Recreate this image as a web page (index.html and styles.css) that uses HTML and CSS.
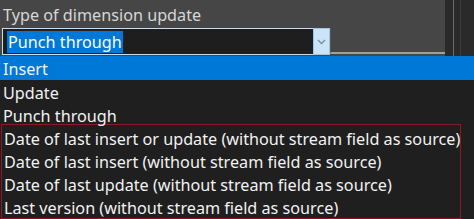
FILE: index.html
```html
<!DOCTYPE html>
<html>
<head>
<meta charset="utf-8">
<link rel="stylesheet" href="styles.css">
</head>
<body>
<div class="top">
  <div class="main">
    <div class="label">Type of dimension update</div>
    <div class="combo-row">
      <div class="combo">
        <div class="field"><span class="sel">Punch through</span></div>
        <div class="btn">
          <svg width="9" height="6" viewBox="0 0 9 6"><polyline points="1,1 4.5,4.5 8,1" fill="none" stroke="#7d8c9c" stroke-width="1.3"/></svg>
        </div>
      </div>
      <div class="filler"></div>
    </div>
  </div>
  <div class="side">
    <div class="line a"></div>
    <div class="line b"></div>
  </div>
</div>
<div class="list">
  <div class="item active">Insert</div>
  <div class="item">Update</div>
  <div class="item">Punch through</div>
  <div class="boxed">
    <div class="item">Date of last insert or update (without stream field as source)</div>
    <div class="item">Date of last insert (without stream field as source)</div>
    <div class="item">Date of last update (without stream field as source)</div>
    <div class="item">Last version (without stream field as source)</div>
  </div>
</div>
</body>
</html>
```
FILE: styles.css
```css
html, body {
  margin: 0;
  padding: 0;
}
body {
  width: 474px;
  height: 219px;
  overflow: hidden;
  background: #1f1f1f;
  font-family: "Noto Sans", "Open Sans", sans-serif;
  font-size: 16.2px;
}
.top {
  display: flex;
  height: 56px;
}
.main {
  width: 445px;
  background: #464646;
  display: flex;
  flex-direction: column;
}
.label {
  height: 28px;
  line-height: 30px;
  padding-left: 3px;
  color: #d6d6d6;
  box-sizing: border-box;
}
.combo-row {
  display: flex;
  height: 28px;
}
.combo {
  margin-left: 2px;
  width: 328px;
  display: flex;
  height: 27px;
}
.field {
  flex: 1;
  background: #1e1e1e;
  border: 1px solid #c9dbee;
  border-right: none;
  padding: 2px 0 0 4px;
  box-sizing: border-box;
}
.sel {
  display: inline-block;
  background: #0078d7;
  color: #ffffff;
  line-height: 22px;
  padding: 0 1px;
}
.btn {
  width: 17px;
  background: #cce4f7;
  border: 1px solid #9cc6ea;
  box-sizing: border-box;
  display: flex;
  align-items: center;
  justify-content: center;
}
.filler {
  flex: 1;
  border-bottom: 2px solid #9aa39a;
  box-sizing: border-box;
  height: 26px;
  border-left: 1px solid #555555;
}
.side {
  flex: 1;
  background: #2a2a2a;
  display: flex;
}
.line {
  width: 1px;
  background: #6e6e6e;
}
.line.a {
  margin-left: 8px;
}
.line.b {
  margin-left: 6px;
  background: #3c3c3c;
}
.list {
  color: #f2f2f2;
}
.item {
  height: 23px;
  line-height: 20px;
  padding-top: 3px;
  box-sizing: border-box;
  padding-left: 3px;
  white-space: nowrap;
}
.item.active {
  background: #0078d7;
  height: 24px;
}
.boxed {
  width: 460px;
  margin-left: 1px;
  margin-top: -2px;
  border: 1px solid #8a1a22;
  border-bottom: 2px solid #8a1a22;
  box-sizing: border-box;
  padding-top: 1px;
}
.boxed .item {
  padding-left: 2px;
}
```
